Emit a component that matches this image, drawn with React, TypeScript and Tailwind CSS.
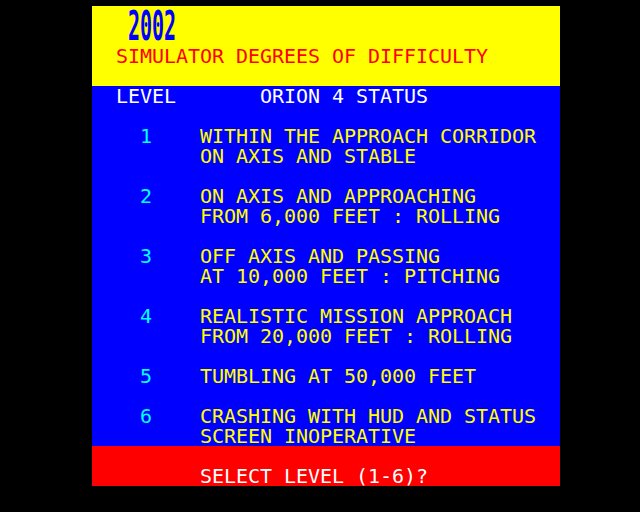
import React from "react";

const YEL = "text-[#ffff00]";
const RED = "text-[#ff0000]";
const WHT = "text-white";
const CYN = "text-[#00ffff]";

const BLUE = "bg-[#0000ff]";
const YBG = "bg-[#ffff00]";
const RBG = "bg-[#ff0000]";

// One teletext line: 20px tall, children laid out left to right on a 12px column grid.
function Row({ bg, children }: { bg: string; children?: React.ReactNode }) {
  return <div className={`h-[20px] leading-[20px] flex whitespace-pre ${bg}`}>{children}</div>;
}

function Item({ n, a, b }: { n: string; a: string; b?: string }) {
  return (
    <>
      <Row bg={BLUE}>
        <span className={`pl-[48px] w-[108px] ${CYN}`}>{n}</span>
        <span className={YEL}>{a}</span>
      </Row>
      {b !== undefined && (
        <Row bg={BLUE}>
          <span className={`pl-[108px] ${YEL}`}>{b}</span>
        </Row>
      )}
    </>
  );
}

export default function App() {
  return (
    <div className="w-[640px] h-[512px] bg-black pl-[92px] pt-[6px]">
      <div
        className="w-[468px] flex flex-col text-[20px] tracking-[-0.04px]"
        style={{ fontFamily: '"DejaVu Sans Mono", monospace' }}
      >
        {/* double-height title across two rows */}
        <div className={`h-[40px] ${YBG} leading-[20px] pl-[36px]`}>
          <span className="inline-block origin-top scale-y-[2] font-bold text-[#0000ff]">2002</span>
        </div>
        <Row bg={YBG}>
          <span className={`pl-[24px] ${RED}`}>SIMULATOR DEGREES OF DIFFICULTY</span>
        </Row>
        <Row bg={YBG} />
        <Row bg={BLUE}>
          <span className={`pl-[24px] w-[168px] ${WHT}`}>LEVEL</span>
          <span className={WHT}>ORION 4 STATUS</span>
        </Row>
        <Row bg={BLUE} />
        <Item n="1" a="WITHIN THE APPROACH CORRIDOR" b="ON AXIS AND STABLE" />
        <Row bg={BLUE} />
        <Item n="2" a="ON AXIS AND APPROACHING" b="FROM 6,000 FEET : ROLLING" />
        <Row bg={BLUE} />
        <Item n="3" a="OFF AXIS AND PASSING" b="AT 10,000 FEET : PITCHING" />
        <Row bg={BLUE} />
        <Item n="4" a="REALISTIC MISSION APPROACH" b="FROM 20,000 FEET : ROLLING" />
        <Row bg={BLUE} />
        <Item n="5" a="TUMBLING AT 50,000 FEET" />
        <Row bg={BLUE} />
        <Item n="6" a="CRASHING WITH HUD AND STATUS" b="SCREEN INOPERATIVE" />
        <Row bg={RBG} />
        <Row bg={RBG}>
          <span className={`pl-[108px] ${WHT}`}>SELECT LEVEL (1-6)?</span>
        </Row>
      </div>
    </div>
  );
}
